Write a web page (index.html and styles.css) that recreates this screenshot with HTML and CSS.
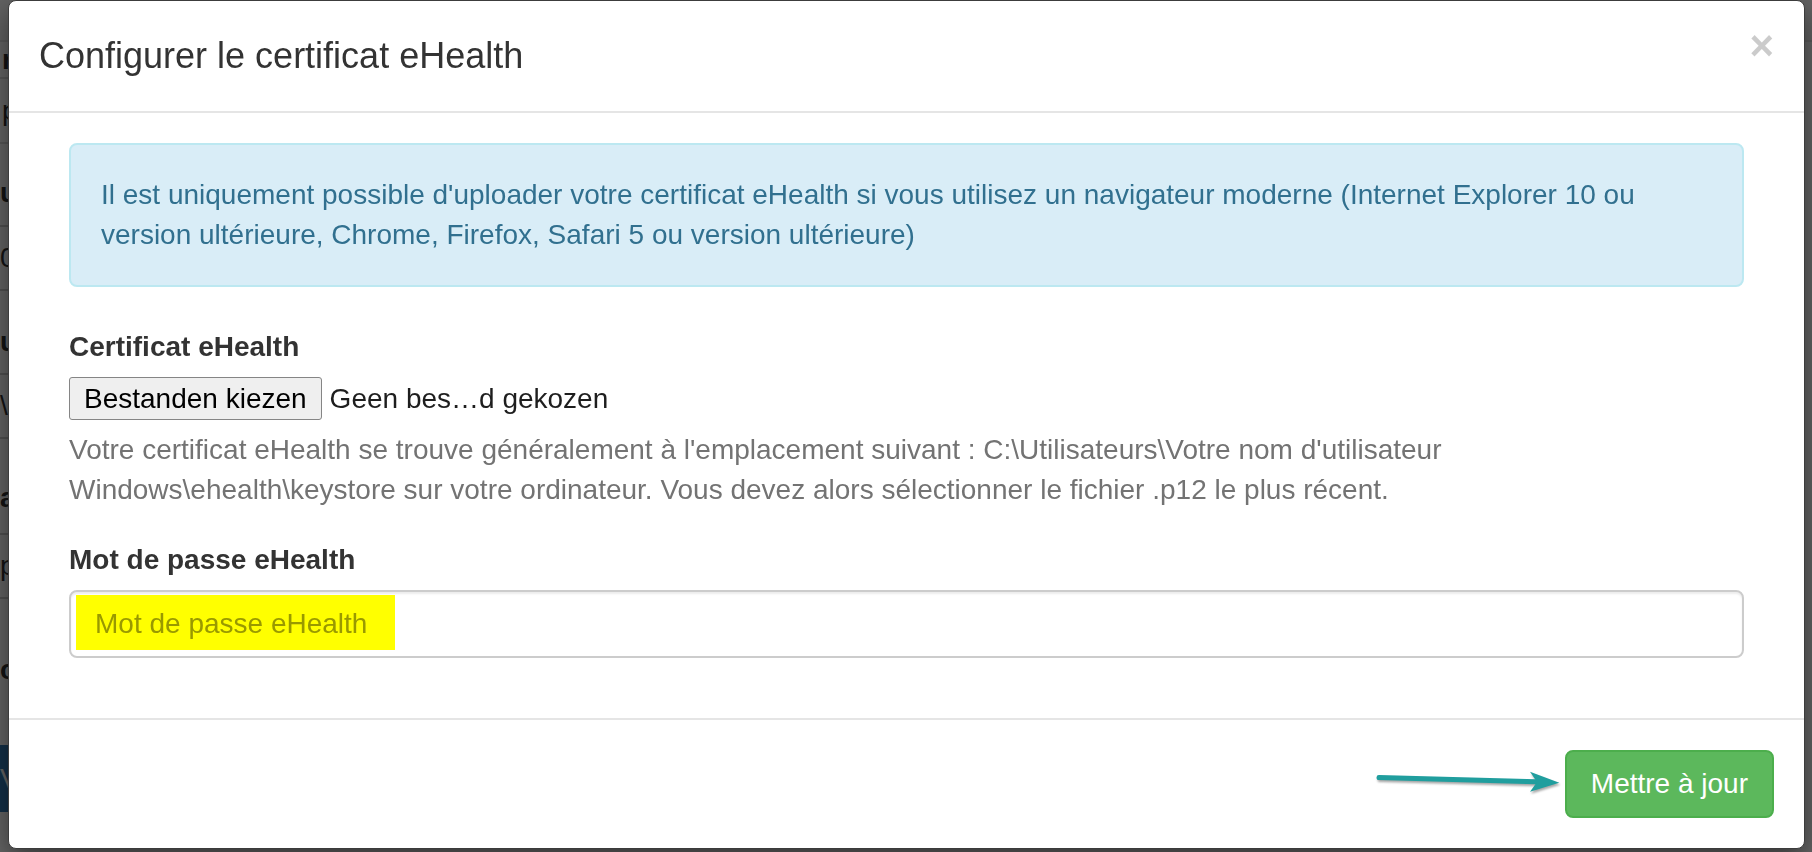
FILE: index.html
```html
<!DOCTYPE html>
<html lang="fr">
<head>
<meta charset="utf-8">
<title>Configurer le certificat eHealth</title>
<link rel="stylesheet" href="styles.css">
</head>
<body>
  <!-- application page behind the dialog (only its left edge shows) -->
  <div class="page">
    <div class="page-nav"></div>
    <div class="page-strip">
      <div class="page-row page-row-head">r</div>
      <div class="page-row page-row-item">p</div>
      <div class="page-label page-label-1">u</div>
      <div class="page-field">0</div>
      <div class="page-label page-label-2">u</div>
      <div class="page-field">\</div>
      <div class="page-label page-label-3">a</div>
      <div class="page-field">p</div>
      <div class="page-label page-label-4">c</div>
      <div class="page-action">V</div>
    </div>
  </div>

  <div class="backdrop"></div>

  <div class="modal" role="dialog" aria-labelledby="modal-title">
    <div class="modal-header">
      <h4 class="modal-title" id="modal-title">Configurer le certificat eHealth</h4>
      <button class="close" type="button" aria-label="Fermer">×</button>
    </div>

    <div class="modal-body">
      <div class="alert">Il est uniquement possible d'uploader votre certificat eHealth si vous utilisez un navigateur moderne (Internet Explorer 10 ou version ultérieure, Chrome, Firefox, Safari 5 ou version ultérieure)</div>

      <div class="form-group">
        <label class="control-label">Certificat eHealth</label>
        <div class="file-input">
          <span class="file-btn">Bestanden kiezen</span>
          <span class="file-name">Geen bes…d gekozen</span>
        </div>
        <p class="help-block">Votre certificat eHealth se trouve généralement à l'emplacement suivant : C:\Utilisateurs\Votre nom d'utilisateur Windows\ehealth\keystore sur votre ordinateur. Vous devez alors sélectionner le fichier .p12 le plus récent.</p>
      </div>

      <div class="form-group">
        <label class="control-label" for="ehealth-password">Mot de passe eHealth</label>
        <div class="input-wrap">
          <input class="form-control" id="ehealth-password" type="password" placeholder="Mot de passe eHealth">
          <span class="highlight"></span>
        </div>
      </div>
    </div>

    <div class="modal-footer">
      <svg class="pointer-arrow" viewBox="0 0 200 35" width="200" height="35" aria-hidden="true">
        <line x1="9" y1="12.5" x2="166" y2="16.8" stroke="#209e9e" stroke-width="5" stroke-linecap="round"/>
        <polygon points="160,6.7 189.3,17.7 160,26.7 167,17" fill="#209e9e"/>
      </svg>
      <button class="btn btn-success" type="button">Mettre à jour</button>
    </div>
  </div>
</body>
</html>
```

FILE: styles.css
```css
* {
  box-sizing: border-box;
}

html,
body {
  margin: 0;
}

body {
  position: relative;
  width: 1812px;
  height: 852px;
  overflow: hidden;
  background: #fff;
  color: #333;
  font-family: "Liberation Sans", Arial, sans-serif;
  font-size: 28px;
  line-height: 40px;
}

/* ---------- page behind the dialog ---------- */
.page {
  display: flex;
  flex-direction: column;
}

.page-nav {
  height: 42px;
  background: #f8f8f8;
  border-bottom: 2px solid #e7e7e7;
}

.page-strip {
  display: flex;
  flex-direction: column;
  width: 40px;
}

.page-row {
  display: flex;
  align-items: center;
  padding-left: 2px;
  border-bottom: 2px solid #ddd;
}

.page-row-head {
  height: 37px;
  font-weight: bold;
}

.page-row-item {
  height: 65px;
}

.page-label {
  display: flex;
  align-items: flex-end;
  font-weight: bold;
}

.page-label-1 {
  height: 81px;
  padding-bottom: 12px;
}

.page-label-2 {
  height: 82px;
  padding-bottom: 11px;
}

.page-label-3 {
  height: 94px;
  padding-bottom: 15px;
}

.page-label-4 {
  height: 146px;
  padding-bottom: 55px;
}

.page-field {
  display: flex;
  align-items: center;
  height: 66px;
  border-top: 2px solid #ccc;
  border-bottom: 2px solid #ccc;
}

.page-action {
  display: flex;
  align-items: center;
  height: 67px;
  background: #337ab7;
  color: #fff;
}

.backdrop {
  position: fixed;
  inset: 0;
  background: rgba(0, 0, 0, 0.6);
}

/* ---------- dialog ---------- */
.modal {
  position: absolute;
  top: 0;
  left: 8px;
  width: 1797px;
  background: #fff;
  border: 1px solid #3c3c3c;
  border-radius: 8px;
  box-shadow: 0 10px 30px rgba(0, 0, 0, 0.5);
}

.modal-header {
  display: flex;
  justify-content: space-between;
  align-items: flex-start;
  padding: 30px;
  border-bottom: 2px solid #e5e5e5;
}

.modal-title {
  margin: 0;
  font-size: 36px;
  line-height: 50px;
  font-weight: normal;
  color: #333;
}

.close {
  margin-top: -6px;
  padding: 0;
  border: 0;
  background: none;
  font-family: inherit;
  font-size: 42px;
  font-weight: bold;
  line-height: 1;
  color: #000;
  opacity: 0.2;
  cursor: pointer;
}

.modal-body {
  padding: 30px 60px;
}

.alert {
  margin-bottom: 40px;
  padding: 30px;
  border: 2px solid #bce8f1;
  border-radius: 8px;
  background: #d9edf7;
  color: #31708f;
}

.form-group {
  margin-bottom: 30px;
}

.control-label {
  display: block;
  margin-bottom: 10px;
  font-weight: bold;
}

.file-input {
  display: flex;
  align-items: center;
  gap: 8px;
}

.file-btn {
  height: 43px;
  padding: 0 14px;
  border: 1px solid #858585;
  border-radius: 3px;
  background: #efefef;
  color: #000;
  line-height: 41px;
}

.file-name {
  color: #1e1e1e;
}

.help-block {
  margin: 10px 0 20px;
  color: #737373;
}

.input-wrap {
  position: relative;
}

.form-control {
  display: block;
  width: 100%;
  height: 68px;
  padding: 12px 24px;
  border: 2px solid #ccc;
  border-radius: 8px;
  background: #fff;
  box-shadow: inset 0 2px 2px rgba(0, 0, 0, 0.075);
  color: #555;
  font: inherit;
}

.form-control::placeholder {
  color: #999;
}

/* marker highlight laid over the placeholder */
.highlight {
  position: absolute;
  left: 7px;
  top: 5px;
  width: 319px;
  height: 55px;
  background: #ff0;
  mix-blend-mode: multiply;
  pointer-events: none;
}

.modal-footer {
  position: relative;
  display: flex;
  justify-content: flex-end;
  padding: 30px;
  border-top: 2px solid #e5e5e5;
}

.pointer-arrow {
  position: absolute;
  left: 1361px;
  top: 45px;
  overflow: visible;
  filter: drop-shadow(1px 2px 1px rgba(0, 0, 0, 0.35));
}

.btn {
  padding: 12px 24px;
  border-radius: 8px;
  font: inherit;
  line-height: 40px;
  cursor: pointer;
}

.btn-success {
  border: 2px solid #4cae4c;
  background: #5cb85c;
  color: #fff;
}
```
